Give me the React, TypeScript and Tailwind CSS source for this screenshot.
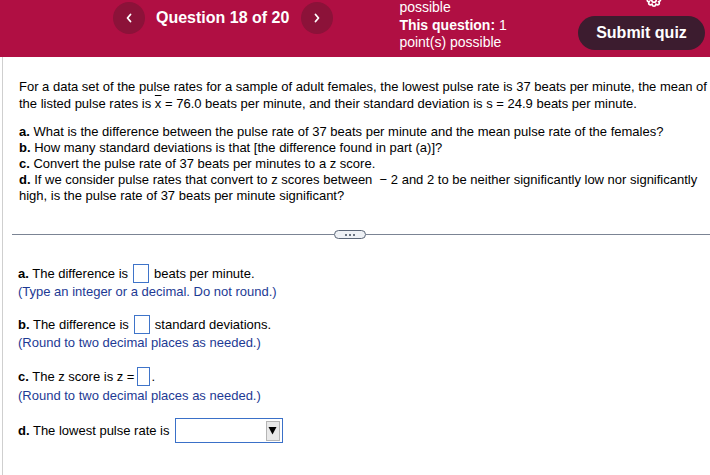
import React from "react";

const Chevron = ({ dir }: { dir: "left" | "right" }) => (
  <svg width="8" height="10" viewBox="0 0 8 10" fill="none">
    {dir === "left" ? (
      <path d="M5.5 1.5 L2.5 5 L5.5 8.5" stroke="white" strokeWidth="1.8" strokeLinecap="round" strokeLinejoin="round" />
    ) : (
      <path d="M2.5 1.5 L5.5 5 L2.5 8.5" stroke="white" strokeWidth="1.8" strokeLinecap="round" strokeLinejoin="round" />
    )}
  </svg>
);

const Box = ({ w = 16 }: { w?: number }) => (
  <span
    className={`inline-block h-[19px] border border-[#3f74c9] bg-white ${w === 16 ? "w-[16px]" : "w-[13px]"}`}
  />
);

export default function App() {
  return (
    <div
      className="w-[710px] h-[475px] overflow-hidden bg-white text-black"
      style={{ fontFamily: '"Liberation Sans", Arial, sans-serif' }}
    >
      {/* Header */}
      <div className="h-[57px] bg-[#b00f43] flex overflow-hidden text-white">
        <div className="ml-[113px] mt-[2px] h-[32px] flex items-center">
          <div className="w-[32px] h-[32px] rounded-full bg-[#8c1239] flex items-center justify-center">
            <Chevron dir="left" />
          </div>
          <div className="ml-[11px] text-[16px] font-bold leading-none">Question 18 of 20</div>
          <div className="ml-[12px] w-[32px] h-[32px] rounded-full bg-[#8c1239] flex items-center justify-center">
            <Chevron dir="right" />
          </div>
        </div>
        <div className="ml-[66px] mt-[-1px] text-[14px] leading-[17.5px]">
          <div>possible</div>
          <div>
            <span className="font-bold">This question:</span> 1
          </div>
          <div>point(s) possible</div>
        </div>
        <div className="ml-auto mr-[5px] flex flex-col items-end">
          <svg
            className="mt-[-9px] mr-[42px]"
            width="18"
            height="18"
            viewBox="0 0 24 24"
            fill="none"
            stroke="white"
            strokeWidth="2.2"
          >
            <path d="M12 2.5c1.6 0 2.3 1.4 2.6 2.6 1.1-.7 2.6-1.3 3.8-.1 1.1 1.1.6 2.7-.1 3.8 1.2.3 2.6 1 2.6 2.6s-1.4 2.3-2.6 2.6c.7 1.1 1.3 2.6.1 3.8-1.1 1.1-2.7.6-3.8-.1-.3 1.2-1 2.6-2.6 2.6s-2.3-1.4-2.6-2.6c-1.1.7-2.6 1.300-3.8.1-1.1-1.1-.6-2.7.1-3.8C4.5 14.6 3 13.9 3 12.3s1.4-2.3 2.6-2.6c-.7-1.1-1.3-2.6-.1-3.8 1.1-1.1 2.7-.6 3.8.1.3-1.2 1-2.6 2.6-2.6z" />
            <circle cx="12" cy="12" r="3" />
          </svg>
          <button className="mt-[7px] w-[127px] h-[34px] rounded-full bg-[#3c1c2f] text-white text-[16px] font-bold">
            Submit quiz
          </button>
        </div>
      </div>

      {/* Content */}
      <div className="ml-[2px] border-l border-[#cfcfcf] h-[418px] text-[13px]">
        <div className="pt-[21px] pl-[16px] leading-[17px]">
          For a data set of the pulse rates for a sample of adult females, the lowest pulse rate is 37 beats per minute, the mean of
          <br />
          the listed pulse rates is <span className="overline">x</span> = 76.0 beats per minute, and their standard deviation is s = 24.9 beats per minute.
        </div>
        <div className="mt-[12px] pl-[16px] leading-[16px]">
          <div>
            <span className="font-bold">a.</span> What is the difference between the pulse rate of 37 beats per minute and the mean pulse rate of the females?
          </div>
          <div>
            <span className="font-bold">b.</span> How many standard deviations is that [the difference found in part (a)]?
          </div>
          <div>
            <span className="font-bold">c.</span> Convert the pulse rate of 37 beats per minutes to a z score.
          </div>
          <div>
            <span className="font-bold">d.</span> If we consider pulse rates that convert to z scores between{"\u00a0 "}−{"\u00a0"}2 and 2 to be neither significantly low nor significantly
            <br />
            high, is the pulse rate of 37 beats per minute significant?
          </div>
        </div>

        {/* Separator */}
        <div className="mt-[26px] ml-[9px] flex items-center h-[9px]">
          <div className="w-[322px] h-[1.5px] bg-[#7b8494]" />
          <div className="w-[32px] h-[9px] rounded-full border border-[#5b6678] bg-[#eef1f5] flex items-center justify-center gap-[2px]">
            <span className="w-[2px] h-[2px] rounded-full bg-[#3d4757]" />
            <span className="w-[2px] h-[2px] rounded-full bg-[#3d4757]" />
            <span className="w-[2px] h-[2px] rounded-full bg-[#3d4757]" />
          </div>
          <div className="flex-1 h-[1.5px] bg-[#7b8494]" />
        </div>

        {/* Answers */}
        <div className="mt-[25px] pl-[15px] flex flex-col">
          <div>
            <div className="h-[19px] flex items-center gap-[5px]">
              <span>
                <span className="font-bold">a.</span> The difference is
              </span>
              <Box />
              <span>beats per minute.</span>
            </div>
            <div className="leading-[18px] text-[#1d3a94]">(Type an integer or a decimal. Do not round.)</div>
          </div>
          <div className="mt-[14px]">
            <div className="h-[19px] flex items-center gap-[5px]">
              <span>
                <span className="font-bold">b.</span> The difference is
              </span>
              <Box />
              <span>standard deviations.</span>
            </div>
            <div className="leading-[18px] text-[#1d3a94]">(Round to two decimal places as needed.)</div>
          </div>
          <div className="mt-[15px]">
            <div className="h-[19px] flex items-center">
              <span className="mr-[3px]">
                <span className="font-bold">c.</span> The z score is z =
              </span>
              <Box w={13} />
              <span className="ml-[1px]">.</span>
            </div>
            <div className="leading-[18px] text-[#1d3a94] mt-[1px]">(Round to two decimal places as needed.)</div>
          </div>
          <div className="mt-[13px] h-[25px] flex items-center gap-[5px]">
            <span>
              <span className="font-bold">d.</span> The lowest pulse rate is
            </span>
            <div className="w-[108px] h-[25px] border-[1.5px] border-[#3a70c8] bg-white flex items-center justify-end pr-[2px]">
              <div className="w-[14px] h-[20px] bg-[#e9e9e9] border border-[#b5b5b5] flex items-center justify-center">
                <svg width="9" height="9" viewBox="0 0 9 9">
                  <path d="M0.5 1 L8.5 1 L4.5 8.5 Z" fill="black" />
                </svg>
              </div>
            </div>
          </div>
        </div>
      </div>
    </div>
  );
}
